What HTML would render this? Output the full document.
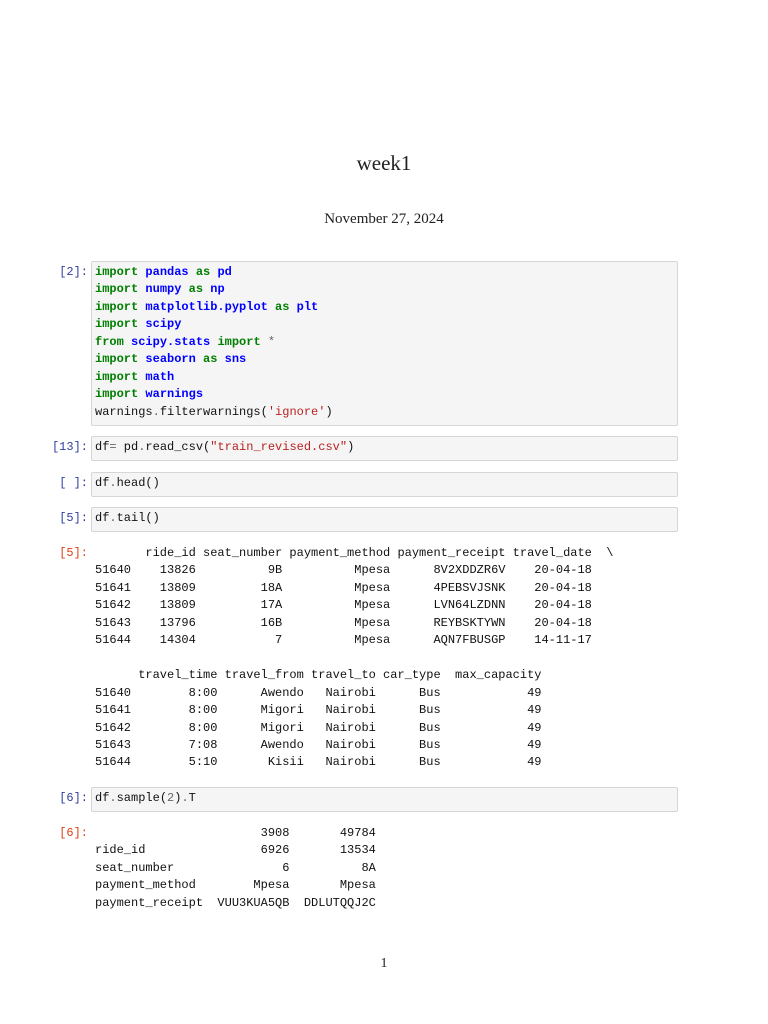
<!DOCTYPE html>
<html><head><meta charset="utf-8"><style>
body{margin:0;background:#fff;width:768px;height:1024px;position:relative;overflow:hidden}
.t{position:absolute;left:0;width:768px;text-align:center;font-family:"Liberation Serif",serif;color:#222}
.box{position:absolute;left:91px;width:585px;background:#f5f5f5;border:1px solid #d6d6d6;border-radius:2px}
pre{position:absolute;margin:0;left:95px;font-family:"Liberation Mono",monospace;font-size:12px;line-height:17.45px;color:#111}
.p{position:absolute;font-family:"Liberation Mono",monospace;font-size:12px;line-height:17.45px;text-align:right;width:88px;left:0}
.pi{color:#303f9f}.po{color:#d84315}
.k{color:#008000;font-weight:bold}.n{color:#0000ff;font-weight:bold}.s{color:#ba2121}.o{color:#666}
</style></head><body>
<div class="t" style="top:151px;font-size:21px">week1</div>
<div class="t" style="top:211px;font-size:15px">November 27, 2024</div>

<div class="box" style="top:261px;height:163px"></div>
<div class="p pi" style="top:264px">[2]:</div>
<pre style="top:264px"><span class="k">import</span> <span class="n">pandas</span> <span class="k">as</span> <span class="n">pd</span>
<span class="k">import</span> <span class="n">numpy</span> <span class="k">as</span> <span class="n">np</span>
<span class="k">import</span> <span class="n">matplotlib.pyplot</span> <span class="k">as</span> <span class="n">plt</span>
<span class="k">import</span> <span class="n">scipy</span>
<span class="k">from</span> <span class="n">scipy.stats</span> <span class="k">import</span> <span class="o">*</span>
<span class="k">import</span> <span class="n">seaborn</span> <span class="k">as</span> <span class="n">sns</span>
<span class="k">import</span> <span class="n">math</span>
<span class="k">import</span> <span class="n">warnings</span>
warnings<span class="o">.</span>filterwarnings(<span class="s">'ignore'</span>)</pre>

<div class="box" style="top:436px;height:23px"></div>
<div class="p pi" style="top:439px">[13]:</div>
<pre style="top:439px">df<span class="o">=</span> pd<span class="o">.</span>read_csv(<span class="s">"train_revised.csv"</span>)</pre>

<div class="box" style="top:472px;height:23px"></div>
<div class="p pi" style="top:475px">[ ]:</div>
<pre style="top:475px">df<span class="o">.</span>head()</pre>

<div class="box" style="top:507px;height:23px"></div>
<div class="p pi" style="top:510px">[5]:</div>
<pre style="top:510px">df<span class="o">.</span>tail()</pre>

<div class="p po" style="top:545px">[5]:</div>
<pre style="top:545px">       ride_id seat_number payment_method payment_receipt travel_date  \
51640    13826          9B          Mpesa      8V2XDDZR6V    20-04-18
51641    13809         18A          Mpesa      4PEBSVJSNK    20-04-18
51642    13809         17A          Mpesa      LVN64LZDNN    20-04-18
51643    13796         16B          Mpesa      REYBSKTYWN    20-04-18
51644    14304           7          Mpesa      AQN7FBUSGP    14-11-17

      travel_time travel_from travel_to car_type  max_capacity
51640        8:00      Awendo   Nairobi      Bus            49
51641        8:00      Migori   Nairobi      Bus            49
51642        8:00      Migori   Nairobi      Bus            49
51643        7:08      Awendo   Nairobi      Bus            49
51644        5:10       Kisii   Nairobi      Bus            49</pre>

<div class="box" style="top:787px;height:23px"></div>
<div class="p pi" style="top:790px">[6]:</div>
<pre style="top:790px">df<span class="o">.</span>sample(<span class="o">2</span>)<span class="o">.</span>T</pre>

<div class="p po" style="top:825px">[6]:</div>
<pre style="top:825px">                       3908       49784
ride_id                6926       13534
seat_number               6          8A
payment_method        Mpesa       Mpesa
payment_receipt  VUU3KUA5QB  DDLUTQQJ2C</pre>

<div class="t" style="top:956px;font-size:14px">1</div>
</body></html>
